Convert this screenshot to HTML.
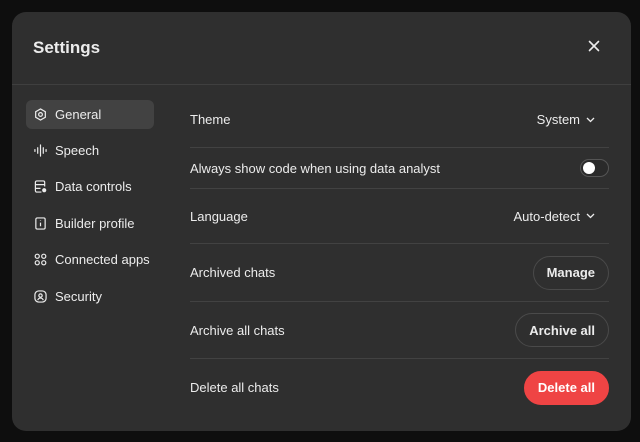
<!DOCTYPE html>
<html><head><style>
*{margin:0;padding:0;box-sizing:border-box}
body{width:640px;height:442px;background:#0e0e0e;font-family:"Liberation Sans",sans-serif;color:#ececec;position:relative;overflow:hidden}
.m{position:absolute;left:12px;top:12px;width:619px;height:419px;background:#2f2f2f;border-radius:14px}
.t{position:absolute;left:21px;top:26px;font-size:17px;font-weight:bold;color:#ececec}
.x{position:absolute;left:576px;top:28px}
.hd{position:absolute;left:0;right:0;top:72px;height:1px;background:#3f3f3f}
.nav{position:absolute;left:14px;top:84px;width:128px}
.ni{height:36.4px;display:flex;align-items:center;padding-left:8px;font-size:13px;position:relative}
.ni svg{margin-right:8px;flex:none}
.ni.a:before{content:"";position:absolute;left:0;right:0;top:3.7px;height:29px;background:#424242;border-radius:6px;z-index:-1}
.nav{z-index:1}
.row{position:absolute;left:178px;width:419px;display:flex;align-items:center;justify-content:space-between;font-size:13px;border-bottom:1px solid #424242}
.dd{display:flex;align-items:center;gap:6px;padding-right:14px}
.btn{border:1px solid #4a4a4a;border-radius:18px;height:34px;padding:0 13px;display:flex;align-items:center;font-weight:bold;font-size:13px}
.del{background:#ef4444;border-color:#ef4444;color:#fff}
.tg{width:29px;height:18px;border-radius:9px;background:#2a2a2a;border:1px solid #555;position:relative}
.tg:after{content:"";position:absolute;left:2px;top:2px;width:12px;height:12px;border-radius:50%;background:#fff}
</style></head><body>
<div class="m">
<div class="t">Settings</div>
<svg class="x" width="12" height="12" viewBox="0 0 12 12"><path d="M1.5 1.5L10.5 10.5M10.5 1.5L1.5 10.5" stroke="#ececec" stroke-width="1.6" stroke-linecap="round"/></svg>
<div class="hd"></div>
<div class="nav">
<div class="ni a"><svg width="13" height="13" viewBox="0 0 14 14" fill="none" stroke="#ececec" stroke-width="1.3"><path d="M7 1L12.2 4v6L7 13 1.8 10V4z"/><circle cx="7" cy="7" r="2"/></svg>General</div>
<div class="ni"><svg width="13" height="13" viewBox="0 0 14 14" stroke="#ececec" stroke-width="1.3" stroke-linecap="round"><path d="M1 6v2M4 4v6M7 1v12M10 4v6M13 6v2"/></svg>Speech</div>
<div class="ni"><svg width="13" height="13" viewBox="0 0 14 14" fill="none" stroke="#ececec" stroke-width="1.3"><path d="M8 13H3a1.5 1.5 0 01-1.5-1.5v-9A1.5 1.5 0 013 1h7a1.5 1.5 0 011.5 1.5V7M2 5h9M2 9h5"/><circle cx="11" cy="11" r="1.6" fill="#ececec"/></svg>Data controls</div>
<div class="ni"><svg width="13" height="13" viewBox="0 0 14 14" fill="none" stroke="#ececec" stroke-width="1.3"><rect x="2" y="1" width="10" height="12" rx="1.5"/><path d="M7 6v4M7 3.5v.5"/></svg>Builder profile</div>
<div class="ni"><svg width="13" height="13" viewBox="0 0 14 14" fill="none" stroke="#ececec" stroke-width="1.3"><circle cx="3.5" cy="3.5" r="2.2"/><circle cx="10.5" cy="3.5" r="2.2"/><circle cx="3.5" cy="10.5" r="2.2"/><circle cx="10.5" cy="10.5" r="2.2"/></svg>Connected apps</div>
<div class="ni"><svg width="13" height="13" viewBox="0 0 14 14" fill="none" stroke="#ececec" stroke-width="1.3"><rect x="1" y="1" width="12" height="12" rx="4"/><circle cx="7" cy="6" r="1.8"/><path d="M4 11c.6-1.6 1.6-2.3 3-2.3s2.4.7 3 2.3"/></svg>Security</div>
</div>
<div class="row" style="top:80px;height:56px"><span>Theme</span><span class="dd">System <svg width="9" height="6" viewBox="0 0 9 6"><path d="M1 1l3.5 3.5L8 1" stroke="#ececec" stroke-width="1.3" fill="none"/></svg></span></div>
<div class="row" style="top:136px;height:41px"><span>Always show code when using data analyst</span><div class="tg"></div></div>
<div class="row" style="top:177px;height:55px"><span>Language</span><span class="dd">Auto-detect <svg width="9" height="6" viewBox="0 0 9 6"><path d="M1 1l3.5 3.5L8 1" stroke="#ececec" stroke-width="1.3" fill="none"/></svg></span></div>
<div class="row" style="top:232px;height:58px"><span>Archived chats</span><div class="btn">Manage</div></div>
<div class="row" style="top:290px;height:57px"><span>Archive all chats</span><div class="btn">Archive all</div></div>
<div class="row" style="top:347px;height:57px;border-bottom:none"><span>Delete all chats</span><div class="btn del">Delete all</div></div>
</div>
</body></html>
